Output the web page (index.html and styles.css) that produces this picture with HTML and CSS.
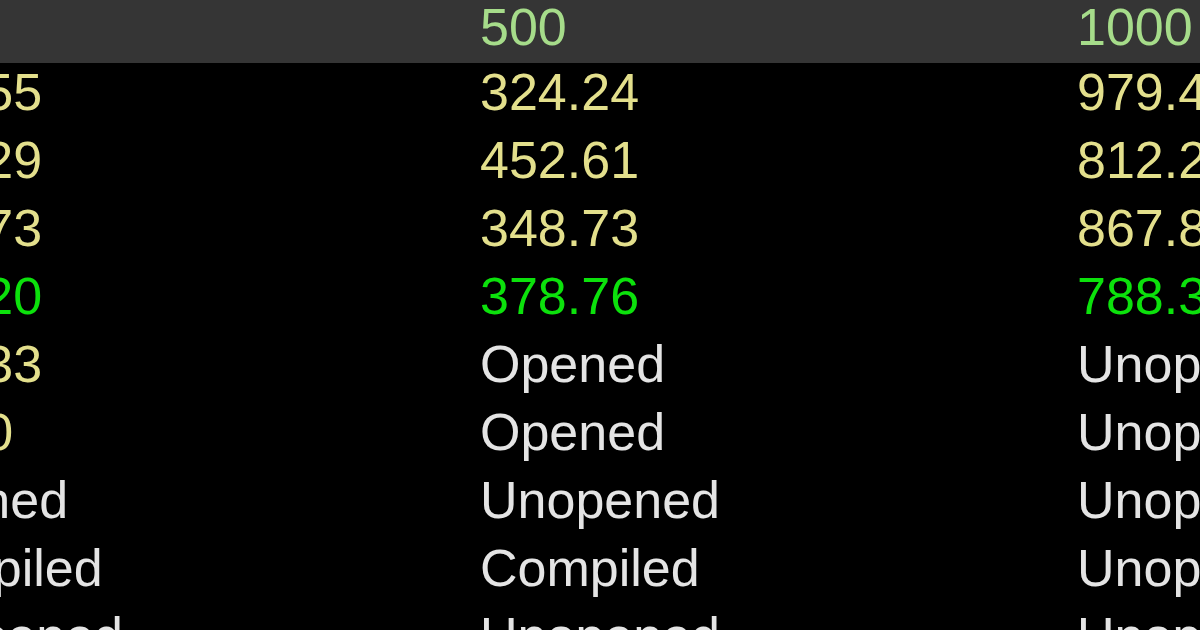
FILE: index.html
```html
<!DOCTYPE html>
<html>
<head>
<meta charset="utf-8">
<link rel="stylesheet" href="styles.css">
</head>
<body>
<div class="viewport">
  <div class="table">
    <div class="row head">
      <div class="cell">100</div>
      <div class="cell">500</div>
      <div class="cell">1000</div>
    </div>
    <div class="row">
      <div class="cell num">215.55</div>
      <div class="cell num">324.24</div>
      <div class="cell num">979.42</div>
    </div>
    <div class="row">
      <div class="cell num">187.29</div>
      <div class="cell num">452.61</div>
      <div class="cell num">812.25</div>
    </div>
    <div class="row">
      <div class="cell num">163.73</div>
      <div class="cell num">348.73</div>
      <div class="cell num">867.81</div>
    </div>
    <div class="row best">
      <div class="cell num">152.20</div>
      <div class="cell num">378.76</div>
      <div class="cell num">788.34</div>
    </div>
    <div class="row">
      <div class="cell num">174.33</div>
      <div class="cell">Opened</div>
      <div class="cell">Unopened</div>
    </div>
    <div class="row">
      <div class="cell num">96.10</div>
      <div class="cell">Opened</div>
      <div class="cell">Unopened</div>
    </div>
    <div class="row">
      <div class="cell">Opened</div>
      <div class="cell">Unopened</div>
      <div class="cell">Unopened</div>
    </div>
    <div class="row">
      <div class="cell">Compiled</div>
      <div class="cell">Compiled</div>
      <div class="cell">Unopened</div>
    </div>
    <div class="row">
      <div class="cell">Unopened</div>
      <div class="cell">Unopened</div>
      <div class="cell">Unopened</div>
    </div>
  </div>
</div>
</body>
</html>
```

FILE: styles.css
```css
html, body {
  margin: 0;
  padding: 0;
  background: #000;
}
.viewport {
  width: 1200px;
  height: 630px;
  overflow: hidden;
  background: #000;
}
.table {
  margin-left: -117px;
  width: 1791px;
  font-family: "Liberation Sans", Arial, sans-serif;
  font-size: 52px;
}
.row {
  display: grid;
  grid-template-columns: 597px 597px 597px;
  height: 68px;
  line-height: 58px;
  color: #e4e4e4;
  white-space: nowrap;
}
.cell.num {
  color: #e3df8c;
}
.row.best .cell.num {
  color: #0ce10c;
}
.row.head {
  height: 63px;
  line-height: 54px;
  background: #353535;
  color: #a6dc8a;
}
```
